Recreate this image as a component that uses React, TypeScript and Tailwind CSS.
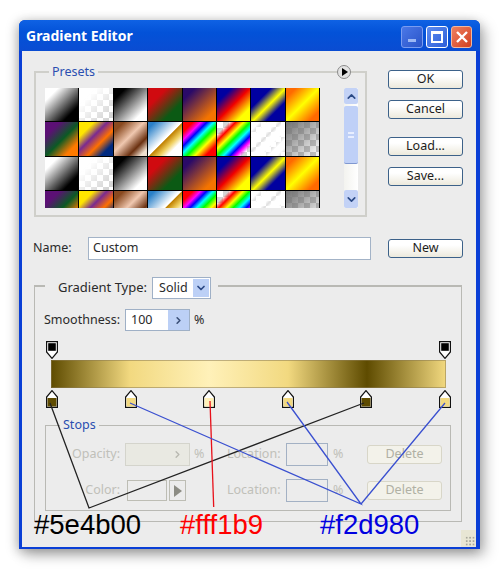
import { ChevronDown, ChevronUp, ChevronRight } from "lucide-react";

const presetsA = [
  "bg-[linear-gradient(135deg,#fff_20%,#000_78%)]",
  "bg-[linear-gradient(135deg,#fff_25%,#fff0_90%),repeating-conic-gradient(#d4d4d4_0_25%,#fff_0_50%)] bg-[length:100%_100%,12px_12px]",
  "bg-[linear-gradient(135deg,#000_18%,#fff_80%)]",
  "bg-[linear-gradient(135deg,#d00a10_28%,#0b5a14_72%)]",
  "bg-[linear-gradient(135deg,#2a0a68_18%,#f47400_82%)]",
  "bg-[linear-gradient(135deg,#0000a0_22%,#f00000_50%,#ffff00_80%)]",
  "bg-[linear-gradient(135deg,#0000a0_30%,#ffff00_52%,#0000a0_72%)]",
  "bg-[linear-gradient(135deg,#ff6a00_15%,#ffff00_50%,#ff6a00_85%)]",
];

const presetsB = [
  "bg-[linear-gradient(135deg,#5c1075_22%,#0b5a24_52%,#ff7a00_80%)]",
  "bg-[linear-gradient(135deg,#ffe600_22%,#7a2a90_42%,#ff7000_62%,#002a80_82%)]",
  "bg-[linear-gradient(135deg,#8a4a20_15%,#f0c8b0_45%,#6a3010_72%,#f0e0d0_90%)]",
  "bg-[linear-gradient(135deg,#2a80c8_10%,#fff_48%,#fff_50%,#c08000_52%,#f0d060_66%,#fff_78%)]",
  "bg-[linear-gradient(135deg,#f00_15%,#f0f_27%,#00f_36%,#0ff_46%,#0f0_56%,#ff0_68%,#f00_84%)]",
  "bg-[linear-gradient(135deg,#fff0_18%,#f00_28%,#ff0_40%,#0f0_50%,#0ff_60%,#00f_70%,#f0f_78%,#fff0_88%),repeating-conic-gradient(#d4d4d4_0_25%,#fff_0_50%)] bg-[length:100%_100%,12px_12px]",
  "bg-[repeating-linear-gradient(135deg,#fff_0,#fff_6px,#fff8_9px,#fff_12px),repeating-conic-gradient(#bbb_0_25%,#fff_0_50%)] bg-[length:100%_100%,10px_10px]",
  "bg-[linear-gradient(135deg,#777_5%,#7770_90%),repeating-conic-gradient(#bbb_0_25%,#eee_0_50%)] bg-[length:100%_100%,12px_12px]",
];

const dialogButton =
  "w-[75px] h-[19px] flex items-center justify-center rounded-[3px] border border-[#3c6189] bg-[linear-gradient(180deg,#fff_30%,#ece9dc)] text-[12.5px] text-[#1c1c1c]";

function TopStop() {
  return (
    <svg width="12" height="18" viewBox="0 0 12 18">
      <path d="M0.6 0.6H11.4V11L6 17.4L0.6 11Z" fill="#fff" stroke="#111" strokeWidth="1.2" />
      <rect x="2.2" y="2.2" width="7.6" height="7.6" fill="#000" />
    </svg>
  );
}

function BottomStop({ color }: { color: string }) {
  return (
    <svg width="12" height="18" viewBox="0 0 12 18">
      <path d="M6 0.6L11.4 7V17.4H0.6V7Z" fill="#fff" stroke="#111" strokeWidth="1.2" />
      <rect x="1.5" y="8" width="9" height="8.5" fill={color} />
    </svg>
  );
}

function Legend({ left, children }: { left: string; children: string }) {
  return (
    <span className={`absolute top-[-10px] ${left} bg-[#ececec] px-[3px] text-[12.5px] leading-[18px] text-[#2a4eb0]`}>
      {children}
    </span>
  );
}

function DisabledRow({ children, location }: { children: React.ReactNode; location: string }) {
  return (
    <div className={`flex items-center ${location}`}>
      {children}
      <span className="ml-[19px] w-[53px] text-[12.5px] text-[#c0c0b9]">Location:</span>
      <div className="ml-[6px] w-[42px] h-[23px] border border-[#a3b1c4]" />
      <span className="ml-[5px] w-[34px] text-[12.5px] text-[#c0c0b9]">%</span>
      <div className="w-[75px] h-[19px] flex items-center justify-center rounded-[3px] border border-[#d8d6c8] bg-[#f3f2ea] text-[12.5px] text-[#b0b0a4]">
        Delete
      </div>
    </div>
  );
}

export default function App() {
  return (
    <div className="relative w-[500px] h-[570px] overflow-hidden bg-white pl-[19px] pt-[20px] font-['Noto_Sans',sans-serif]">
      <div className="w-[461px] h-[529px] flex flex-col rounded-t-[6px] bg-[#0a3fd6] shadow-[-2px_2px_12px_#0004,5px_6px_14px_#0004]">
        {/* Title bar */}
        <div className="h-[31px] shrink-0 flex items-center justify-between pl-[7px] pr-[8px] rounded-t-[6px] bg-[linear-gradient(180deg,#0f62e4,#0352d8_40%,#0a4cd2)]">
          <span className="text-[14px] font-bold text-white">Gradient Editor</span>
          <div className="flex gap-[3px] pt-[3px]">
            <div className="w-[22px] h-[22px] flex items-end pl-[6px] pb-[5px] rounded-[3px] border border-[#7a9cf0] bg-[linear-gradient(135deg,#4a78e8,#2a54c8)]">
              <div className="w-[8px] h-[3px] bg-[#9cb8f4]" />
            </div>
            <div className="w-[22px] h-[22px] flex items-center justify-center rounded-[3px] border border-white bg-[linear-gradient(135deg,#5c8cf0,#2f5ed8)]">
              <div className="w-[12px] h-[12px] border-2 border-t-[3px] border-white" />
            </div>
            <div className="w-[21px] h-[22px] flex items-center justify-center rounded-[3px] border border-[#f0b8a0] bg-[linear-gradient(135deg,#ee8060,#d24020)]">
              <svg width="14" height="14" viewBox="0 0 14 14">
                <path d="M2 2L12 12M12 2L2 12" stroke="#fff" strokeWidth="2.4" />
              </svg>
            </div>
          </div>
        </div>

        {/* Dialog body */}
        <div className="relative h-[496px] ml-[3px] mr-[4px] bg-[#ececec] pl-[12px] pt-[20px]">
          <div className="flex">
            <div className="relative w-[333px] h-[146px] border-2 border-[#cfcfca] pl-[9px] pt-[15px]">
              <Legend left="left-[13px]">Presets</Legend>
              <div className="absolute top-[-8px] right-[14px] w-[14px] h-[14px] flex items-center justify-center rounded-full border border-[#8a8a8a] bg-[#e2e2e2]">
                <div className="ml-[2px] border-y-[4px] border-l-[6px] border-y-transparent border-l-black" />
              </div>
              <div className="flex h-[120px] w-[313px] justify-between">
                <div className="w-[275px] h-[120px] overflow-hidden border-r border-black">
                  <div className="grid grid-cols-8 auto-rows-[33.3px] gap-px bg-black">
                    {[...presetsA, ...presetsB, ...presetsA, ...presetsB].map((c, i) => (
                      <div key={i} className={c} />
                    ))}
                  </div>
                </div>
                <div className="w-[14px] flex flex-col bg-[linear-gradient(90deg,#f3f3ef,#fff)]">
                  <div className="h-[16px] flex items-center justify-center rounded-[2px] bg-[#c3d2f6]">
                    <ChevronUp size={13} strokeWidth={3} className="text-[#2b4a86]" />
                  </div>
                  <div className="mt-[2px] h-[58px] flex items-center justify-center rounded-[2px] border-b border-[#8098d0] bg-[#bfd0f7]">
                    <div className="w-[6px] h-[6px] border-y-2 border-[#e8eeff]" />
                  </div>
                  <div className="flex-1" />
                  <div className="h-[18px] flex items-center justify-center rounded-[2px] bg-[#c3d2f6]">
                    <ChevronDown size={13} strokeWidth={3} className="text-[#2b4a86]" />
                  </div>
                </div>
              </div>
            </div>

            <div className="ml-[21px] flex flex-col -mt-[1px]">
              <div className={dialogButton}>OK</div>
              <div className={`${dialogButton} mt-[11px]`}>Cancel</div>
              <div className={`${dialogButton} mt-[18px]`}>Load...</div>
              <div className={`${dialogButton} mt-[11px]`}>Save...</div>
            </div>
          </div>

          {/* Name row */}
          <div className="flex items-center mt-[20px] h-[23px]">
            <span className="w-[54px] -ml-px text-[12.5px] text-[#2a2a2a]">Name:</span>
            <div className="w-[283px] h-[23px] ml-[1px] flex items-center pl-[4px] border border-[#a3b3c7] bg-white text-[12.5px] text-[#2a2a2a]">
              Custom
            </div>
            <div className={`${dialogButton} ml-[17px]`}>New</div>
          </div>

          {/* Gradient group */}
          <div className="relative w-[428px] h-[237px] mt-[25px] border-t-2 border-x border-b border-[#b9b9b4] pl-[9px] pt-[22px]">
            <div className="absolute top-[-10px] left-[10px] flex items-center gap-[5px] h-[22px] bg-[#ececec] pl-[13px] pr-[7px]">
              <span className="text-[13px] text-[#2a2a2a]">Gradient Type:</span>
              <div className="w-[59px] h-[22px] flex items-center justify-between pl-[6px] pr-px border border-[#9fb0c6] bg-white text-[12.5px] text-[#2a2a2a]">
                Solid
                <div className="w-[16px] h-[18px] flex items-center justify-center bg-[#bcd0f6]">
                  <ChevronDown size={12} strokeWidth={3.5} className="text-[#2b4a86]" />
                </div>
              </div>
            </div>

            <div className="flex items-center h-[22px]">
              <span className="w-[81px] text-[12.5px] text-[#2a2a2a]">Smoothness:</span>
              <div className="w-[65px] h-[22px] flex items-center justify-between pl-[5px] border border-[#9fb0c6] bg-white text-[12.5px] text-[#2a2a2a]">
                100
                <div className="w-[21px] h-[20px] flex items-center justify-center bg-[#bcd0f6]">
                  <ChevronRight size={11} strokeWidth={3.5} className="text-[#3b5078]" />
                </div>
              </div>
              <span className="ml-[4px] text-[12.5px] text-[#2a2a2a]">%</span>
            </div>

            {/* Gradient bar and stops */}
            <div className="w-[405px] mt-[10px] ml-[2px]">
              <div className="flex justify-between">
                <TopStop />
                <TopStop />
              </div>
              <div className="mx-[5px] mt-px h-[28px] bg-[linear-gradient(90deg,#5e4b00,#f2d980_20%,#fff1b9_40%,#f2d980_60%,#5e4b00_80%,#f2d980)] shadow-[inset_0_0_0_1px_#8a7a5088]" />
              <div className="flex justify-between mt-[2px]">
                <BottomStop color="#5e4b00" />
                <BottomStop color="#f2d980" />
                <BottomStop color="#fff1b9" />
                <BottomStop color="#f2d980" />
                <BottomStop color="#5e4b00" />
                <BottomStop color="#f2d980" />
              </div>
            </div>

            {/* Stops group */}
            <div className="relative w-[406px] h-[86px] mt-[17px] ml-[1px] border border-[#b9b9b4] pt-[17px]">
              <Legend left="left-[14px]">Stops</Legend>
              <DisabledRow location="h-[23px]">
                <span className="w-[74px] text-right text-[12.5px] text-[#c0c0b9]">Opacity:</span>
                <div className="ml-[5px] w-[65px] h-[23px] flex items-center justify-end pr-[6px] border border-[#d4d4cc] bg-[#e9e9e2]">
                  <ChevronRight size={11} strokeWidth={3} className="text-[#b8b8b0]" />
                </div>
                <span className="ml-[4px] w-[14px] text-[12.5px] text-[#c0c0b9]">%</span>
              </DisabledRow>
              <DisabledRow location="h-[23px] mt-[13px]">
                <span className="w-[74px] text-right text-[12.5px] text-[#c0c0b9]">Color:</span>
                <div className="ml-[7px] w-[40px] h-[21px] border border-[#bdbdb4]" />
                <div className="ml-[2px] w-[17px] h-[21px] mr-[22px] flex items-center justify-center border border-[#bdbdb4]">
                  <div className="ml-px border-y-[6px] border-l-[8px] border-y-transparent border-l-[#8c8c84]" />
                </div>
              </DisabledRow>
            </div>
          </div>

          {/* Resize grip */}
          <div className="absolute right-0 bottom-0 w-[15px] h-[17px] bg-[#e8e6d4] flex items-end justify-end p-px">
            <div className="w-[10px] h-[10px] bg-[radial-gradient(#a8a89c_35%,#0000_40%)] bg-[length:3.4px_3.4px]" />
          </div>
        </div>
      </div>

      {/* Annotation lines drawn on top of the screenshot */}
      <svg className="absolute inset-0 pointer-events-none" width="500" height="570" viewBox="0 0 500 570">
        <path d="M50 403L89 508L364 403" fill="none" stroke="#222" strokeWidth="1.3" />
        <path d="M210 401L213.7 507" fill="none" stroke="#e8101a" strokeWidth="1.3" />
        <path d="M130 403L361 504L287 402M361 504L445 403" fill="none" stroke="#3a50d0" strokeWidth="1.3" />
      </svg>
      <span className="absolute left-[34px] top-[509px] font-['Liberation_Sans',sans-serif] text-[27.5px] leading-[32px] text-black">#5e4b00</span>
      <span className="absolute left-[180px] top-[509px] font-['Liberation_Sans',sans-serif] text-[27.5px] leading-[32px] text-[#f00]">#fff1b9</span>
      <span className="absolute left-[320px] top-[509px] font-['Liberation_Sans',sans-serif] text-[27.5px] leading-[32px] text-[#0000e0]">#f2d980</span>
    </div>
  );
}
